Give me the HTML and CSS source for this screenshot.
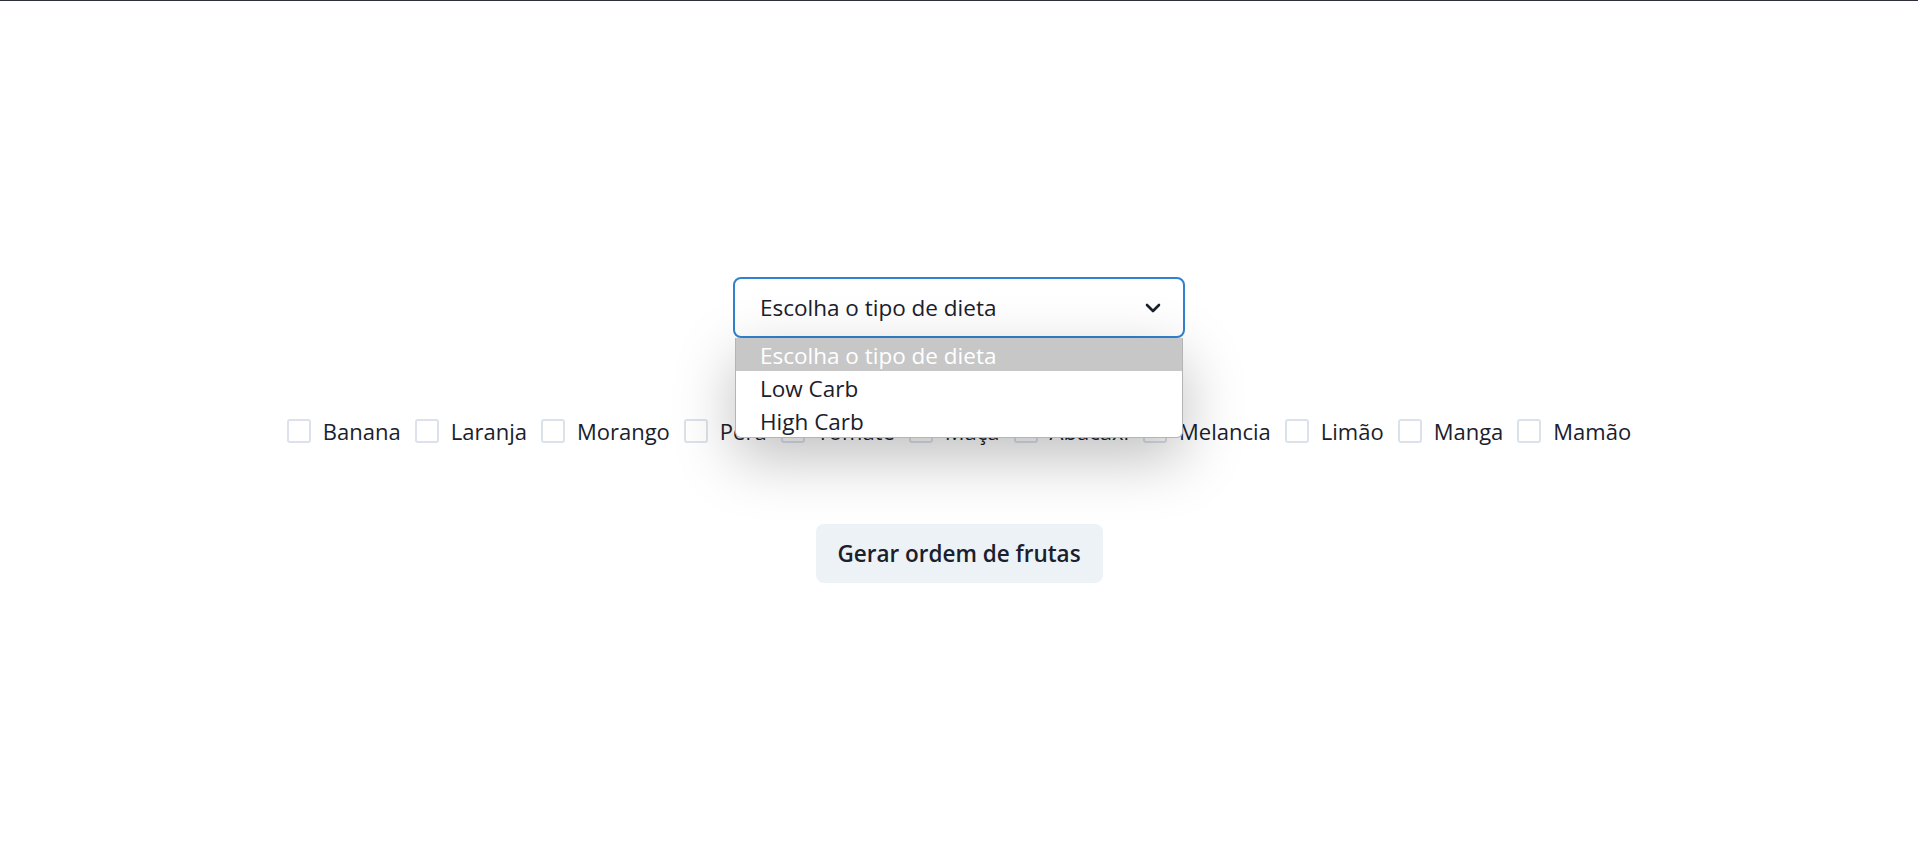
FILE: index.html
```html
<!DOCTYPE html>
<html lang="pt-BR">
<head>
  <meta charset="UTF-8" />
  <meta name="viewport" content="width=device-width, initial-scale=1.0"/>
  <title>Ordem de frutas</title>
  <link rel="stylesheet" href="styles.css">
</head>
<body>
  <div class="page">
    <div class="select-wrap">
      <div class="select">
        <span>Escolha o tipo de dieta</span>
        <svg class="chevron" width="16" height="10" viewBox="0 0 16 10">
          <path d="M2 2l6 6 6-6" fill="none" stroke="#1a202c" stroke-width="2.6" stroke-linecap="round" stroke-linejoin="round"/>
        </svg>
      </div>
      <div class="dropdown">
        <div class="option selected">Escolha o tipo de dieta</div>
        <div class="option">Low Carb</div>
        <div class="option">High Carb</div>
      </div>
    </div>

    <div class="fruits">
      <label class="check"><span class="box"></span>Banana</label>
      <label class="check"><span class="box"></span>Laranja</label>
      <label class="check"><span class="box"></span>Morango</label>
      <label class="check"><span class="box"></span>Pera</label>
      <label class="check"><span class="box"></span>Tomate</label>
      <label class="check"><span class="box"></span>Maçã</label>
      <label class="check"><span class="box"></span>Abacaxi</label>
      <label class="check"><span class="box"></span>Melancia</label>
      <label class="check"><span class="box"></span>Limão</label>
      <label class="check"><span class="box"></span>Manga</label>
      <label class="check"><span class="box"></span>Mamão</label>
    </div>

    <button class="btn">Gerar ordem de frutas</button>
  </div>
</body>
</html>
```

FILE: styles.css
```css
html, body {
  margin: 0;
  padding: 0;
  background: #fff;
}
body {
  font-family: "Open Sans", "Noto Sans", sans-serif;
  color: #1a202c;
  border-top: 1px solid #2d3039;
  height: 855px;
  overflow: hidden;
}
.page {
  display: flex;
  flex-direction: column;
  align-items: center;
  padding-top: 276px;
}
.select-wrap {
  position: relative;
  width: 452px;
}
.select {
  box-sizing: border-box;
  height: 61px;
  border: 2px solid #3182ce;
  border-radius: 8px;
  display: flex;
  align-items: center;
  justify-content: space-between;
  padding: 0 22px 0 25px;
  font-size: 22.5px;
}
.chevron {
  display: block;
}
.dropdown {
  position: absolute;
  top: 61px;
  left: 2px;
  right: 2px;
  background: #fff;
  border: 1px solid #b4b4b4;
  border-top: none;
  border-radius: 0 0 6px 6px;
  box-shadow: 0 20px 60px rgba(0,0,0,0.25);
  overflow: hidden;
  z-index: 10;
}
.option {
  box-sizing: border-box;
  height: 33px;
  line-height: 30px;
  padding: 3px 0 0 24px;
  font-size: 22.5px;
  color: #1a202c;
}
.option.selected {
  background: #c7c7c7;
  color: #fff;
}
.fruits {
  display: flex;
  gap: 14px;
  margin-top: 76px;
  height: 34px;
  align-items: center;
}
.check {
  display: flex;
  align-items: center;
  font-size: 22px;
}
.box {
  box-sizing: border-box;
  width: 24px;
  height: 24px;
  border: 2.5px solid #dbe2ec;
  border-radius: 3px;
  margin-right: 12px;
}
.btn {
  margin-top: 76px;
  width: 287px;
  height: 59px;
  border: none;
  border-radius: 8px;
  background: #edf2f7;
  color: #1a202c;
  font-family: "Open Sans", "Noto Sans", sans-serif;
  font-size: 22.5px;
  font-weight: 600;
  cursor: pointer;
}
```
